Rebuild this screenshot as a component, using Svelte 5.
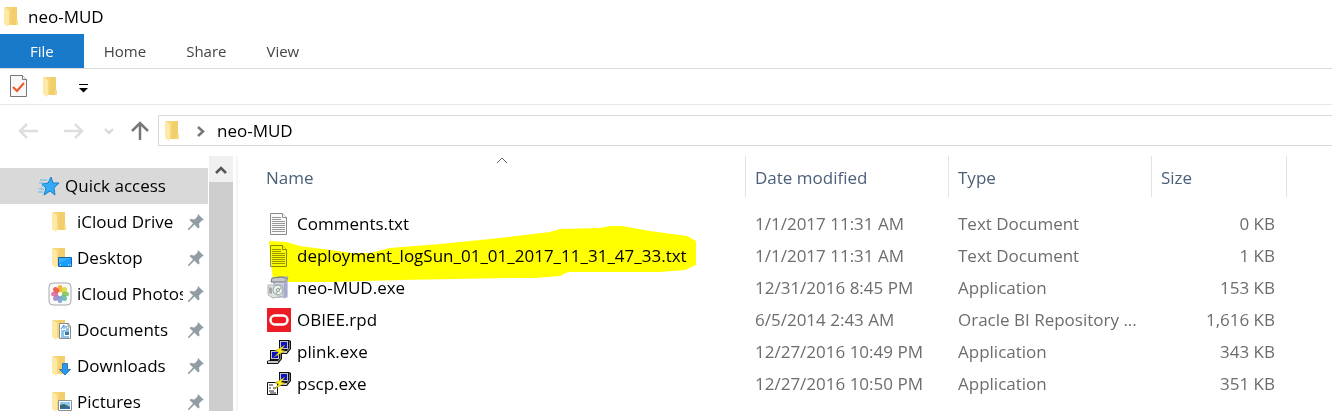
<script>
  const tabs = ["Home", "Share", "View"];

  const places = [
    { name: "iCloud Drive", icon: "folder" },
    { name: "Desktop", icon: "desktop" },
    { name: "iCloud Photos", icon: "photos" },
    { name: "Documents", icon: "documents" },
    { name: "Downloads", icon: "downloads" },
    { name: "Pictures", icon: "pictures" },
  ];

  const files = [
    { name: "Comments.txt", date: "1/1/2017 11:31 AM", type: "Text Document", size: "0 KB", icon: "text" },
    { name: "deployment_logSun_01_01_2017_11_31_47_33.txt", date: "1/1/2017 11:31 AM", type: "Text Document", size: "1 KB", icon: "text", marked: true },
    { name: "neo-MUD.exe", date: "12/31/2016 8:45 PM", type: "Application", size: "153 KB", icon: "installer" },
    { name: "OBIEE.rpd", date: "6/5/2014 2:43 AM", type: "Oracle BI Repository ...", size: "1,616 KB", icon: "oracle" },
    { name: "plink.exe", date: "12/27/2016 10:49 PM", type: "Application", size: "343 KB", icon: "plink" },
    { name: "pscp.exe", date: "12/27/2016 10:50 PM", type: "Application", size: "351 KB", icon: "pscp" },
  ];

  const petals = ["#f7a823", "#d9d62c", "#7fc04c", "#5fb8a0", "#6d9fd8", "#9a7fc4", "#d9669a", "#ee4b3a"];
</script>

{#snippet folderShape()}
  <path d="M5 2h12v18H8z" fill="#f6d67a" />
  <path d="M11 2h6v18h-6z" fill="#f3cf6b" />
  <path d="M16 15h2v5h-2z" fill="#f8dc8a" />
  <path d="M4 2l5 3v15l-1 2-4-3z" fill="#ffe9a6" />
{/snippet}

{#snippet folder()}
  <svg class="icon" width="24" height="24" viewBox="0 0 24 24" aria-hidden="true">{@render folderShape()}</svg>
{/snippet}

{#snippet computer(x, y)}
  <g transform="translate({x} {y})">
    <path d="M3 0h10l2 1v8l-4 5H0v-3l3-1z" fill="#111" />
    <path d="M4 1h8v8H4z" fill="#c6c6c6" />
    <path d="M5 2h6v6H5z" fill="#0a12c8" />
    <path d="M1 11h10v2H1z" fill="#c6c6c6" />
    <path d="M13 2l1-1v8l-3 3v-2l2-2z" fill="#777" />
  </g>
{/snippet}

{#snippet placeIcon(kind)}
  <svg class="icon" width="24" height="24" viewBox="0 0 24 24" aria-hidden="true">
    {#if kind === "photos"}
      <rect x="1" y="1" width="22" height="22" rx="4" fill="#fafafa" stroke="#a8a8a8" />
      {#each petals as color, i}
        <ellipse cx="12" cy="6.500" rx="2.500" ry="3.500" fill={color} fill-opacity="0.85" transform="rotate({i * 45} 12 12)" />
      {/each}
    {:else}
      {@render folderShape()}
    {/if}
    {#if kind === "desktop"}
      <path d="M10.5 11.5h13v9h-13z" fill="#1a9fff" stroke="#1266ad" />
      <path d="M11 12h12l-12 5z" fill="#38b0ff" />
      <path d="M12 19h1m7 0h1m1 0h1" stroke="#fff" />
    {:else if kind === "documents"}
      <path d="M11.5 5.5h9l2 3v12h-11z" fill="#fff" stroke="#8b8b8b" />
      <path d="M20 5v4h3" fill="none" stroke="#8b8b8b" />
      <path d="M13 11l3-4v4m1-2h2m-1 2h3m-8 2h8m-8 2h3m-3 2h3m-3 2h8" fill="none" stroke="#2389cc" />
      <path d="M17 14h4v3h-4z" fill="#347bb0" />
    {:else if kind === "downloads"}
      <path d="M14.5 9.5h5v6h3l-5.500 5.500-5.500-5.500h3z" fill="#2997ec" stroke="#347bb9" />
    {:else if kind === "pictures"}
      <path d="M10.5 10.500h13v10h-13z" fill="#fff" stroke="#8e8e8e" />
      <path d="M12 12h10v7H12z" fill="#8fc9f1" />
      <path d="M12 15l4-1 6 3v2H12z" fill="#3c6774" />
      <path d="M12 18l10-1v2H12z" fill="#2e6dae" />
    {/if}
  </svg>
{/snippet}

{#snippet fileIcon(kind)}
  <svg class="icon" width="24" height="24" viewBox="0 0 24 24" aria-hidden="true">
    {#if kind === "text"}
      <path d="M3.500 1.500h12l4 4v17h-16z" fill="#fafafa" stroke="#8a8a8a" />
      <path d="M15.500 1.500v4h4" fill="#fff" stroke="#8a8a8a" />
      <path d="M5 5.500h9M5 7.500h9M5 9.500h13M5 11.500h13M5 13.500h13M5 15.500h13M5 17.500h13M5 19.500h13" stroke="#969696" />
    {:else if kind === "installer"}
      <path d="M7 3l4-2h10l-1 3v17H7z" fill="#d5d8ea" stroke="#9699b5" />
      <path d="M5 2l10-1 5 2-3 3H4z" fill="#c7c6cb" stroke="#77777c" />
      <path d="M17 6l3-3v17l-3 3z" fill="#a9aad0" />
      <path d="M1 9h15v11l-10 2-5-3z" fill="#dfe2e1" stroke="#b1b4b6" />
      <circle cx="11" cy="14" r="5" fill="#eaf0ed" stroke="#91999a" />
      <path d="M11 14l3-4 2 3zM11 14l-4 4 3 1z" fill="#a5cdb9" />
      <circle cx="11" cy="14" r="1.500" fill="#fff" stroke="#8d9294" />
      <path d="M2 11l3 1v6l-3-1z" fill="#a5a7a9" />
    {:else if kind === "oracle"}
      <path d="M0 0h24v24H0z" fill="#ed1c24" />
      <rect x="3.500" y="7.500" width="17" height="9" rx="4.500" fill="none" stroke="#fff" stroke-width="2.500" />
    {:else}
      {@render computer(9, 0)}
      {#if kind === "plink"}
        {@render computer(0, 10)}
      {:else}
        <path d="M.5 10.500h10v12H.5z" fill="#fff" stroke="#111" />
        <path d="M2 13h4m-4 3h2m2 0h3m-7 3h5m-4 2h6" stroke="#222" />
      {/if}
      <path d="M18 5l-10 6 4 1-5 5 11-6-4-1z" fill="#ffee20" stroke="#a09000" stroke-width=".5" />
    {/if}
  </svg>
{/snippet}

<div class="explorer">
  <header class="title">
    {@render folder()}
    <span>neo-MUD</span>
  </header>

  <nav class="ribbon" aria-label="Ribbon">
    <button class="tab file">File</button>
    {#each tabs as tab}
      <button class="tab">{tab}</button>
    {/each}
  </nav>

  <div class="quickbar">
    <button aria-label="Properties">
      <svg class="icon" width="24" height="24" viewBox="0 0 24 24">
        <path d="M3.500 .500h12l4 4v17h-16z" fill="#f8f8f8" stroke="#777" />
        <path d="M15.500 .500v4h4" fill="#fff" stroke="#777" />
        <path d="M6 12l4 4 7-8" fill="none" stroke="#f0561d" stroke-width="2" />
      </svg>
    </button>
    <button aria-label="New folder">{@render folder()}</button>
    <button aria-label="Customize Quick Access Toolbar">
      <svg class="icon" width="24" height="24" viewBox="0 0 24 24">
        <path d="M8 9.500h9" stroke="#000" />
        <path d="M8 13h9l-4.500 4.500z" />
      </svg>
    </button>
  </div>

  <div class="navbar">
    <button aria-label="Back" disabled>
      <svg class="icon" width="24" height="24" viewBox="0 0 24 24"><path d="M22 12H4m7-7l-7 7 7 7" fill="none" stroke="#dedede" stroke-width="2.500" /></svg>
    </button>
    <button aria-label="Forward" disabled>
      <svg class="icon" width="24" height="24" viewBox="0 0 24 24"><path d="M2 12h18m-7-7l7 7-7 7" fill="none" stroke="#dedede" stroke-width="2.500" /></svg>
    </button>
    <button class="recent" aria-label="Recent locations" disabled>
      <svg class="icon" width="12" height="24" viewBox="0 0 12 24"><path d="M2 10l4 4 4-4" fill="none" stroke="#d6d6d6" stroke-width="2" /></svg>
    </button>
    <button class="up" aria-label="Up">
      <svg class="icon" width="24" height="24" viewBox="0 0 24 24"><path d="M12 21V4m-8 8l8-8 8 8" fill="none" stroke="#777" stroke-width="2.500" /></svg>
    </button>
    <div class="address">
      {@render folder()}
      <svg class="icon" width="12" height="24" viewBox="0 0 12 24" aria-hidden="true"><path d="M3 8l5 4.500L3 17" fill="none" stroke="#777" stroke-width="2.500" /></svg>
      <a href="#neo-mud">neo-MUD</a>
    </div>
  </div>

  <div class="body">
    <nav class="places" aria-label="Navigation pane">
      <a class="place root" href="#quick">
        <svg class="icon" width="24" height="24" viewBox="0 0 24 24" aria-hidden="true">
          <path d="M15 3l2 6h6l-5 5 1 7-5-4-6 4 2-7-4-4 6-1z" fill="#35aaf5" stroke="#1681cd" />
          <path d="M4 6h7M3 9h5M5 12h3M3 15h5M2 18h5" stroke="#65b7e9" />
        </svg>
        <span>Quick access</span>
      </a>
      {#each places as place}
        <a class="place" href="#{place.icon}">
          {@render placeIcon(place.icon)}
          <span>{place.name}</span>
          <svg class="pin" width="16" height="16" viewBox="0 0 16 16" aria-hidden="true">
            <path d="M10 0l6 6-2 .5-3 3 .5 4-1.500 1-3.500-4L1 16H0v-1l5-5.500L1.500 6l1-1 4 .5 3-3z" fill="#919ca3" />
          </svg>
        </a>
      {/each}
    </nav>

    <div class="scrollbar">
      <button aria-label="Scroll up">
        <svg class="icon" width="12" height="12" viewBox="0 0 12 12"><path d="M1 10l5-5 5 5" fill="none" stroke="#555" stroke-width="2.500" /></svg>
      </button>
    </div>

    <main>
      <table>
        <thead>
          <tr>
            <th class="name" aria-sort="ascending">
              <button>Name</button>
              <svg class="sort" width="12" height="8" viewBox="0 0 12 8" aria-hidden="true"><path d="M1 7l5-5 5 5" fill="none" stroke="#666" /></svg>
            </th>
            <th class="date"><button>Date modified</button></th>
            <th class="type"><button>Type</button></th>
            <th class="size"><button>Size</button></th>
          </tr>
        </thead>
        <tbody>
          {#each files as file}
            <tr>
              <td class="name">
                <div class="entry">
                  {@render fileIcon(file.icon)}
                  <span>{file.name}</span>
                </div>
                {#if file.marked}
                  <svg class="marker" width="430" height="58" viewBox="0 0 430 58" aria-hidden="true">
                    <path d="M1 15L18 16 32 20 62 24 84 27H102L122 22 172 18 232 12 282 6 292 3 332 2 342 0H354L382 5 419 10 428 15V39L417 44 392 46H300L292 50 267 52H242L132 54 62 56H17L5 53 3 38z" fill="#ff0" />
                  </svg>
                {/if}
              </td>
              <td>{file.date}</td>
              <td>{file.type}</td>
              <td class="amount">{file.size}</td>
            </tr>
          {/each}
        </tbody>
      </table>
    </main>
  </div>
</div>

<style>
  :global(body) {
    margin: 0;
    background: #fff;
  }

  .explorer {
    height: 100vh;
    display: flex;
    flex-direction: column;
    overflow: hidden;
    font-family: "Open Sans", "Noto Sans", sans-serif;
    font-size: 17px;
    line-height: 24px;
    color: #000;
  }

  button {
    border: 0;
    padding: 0;
    background: none;
    font: inherit;
    color: inherit;
  }

  a {
    color: inherit;
    text-decoration: none;
  }

  .icon {
    display: block;
    flex: none;
  }

  .title {
    height: 34px;
    display: flex;
    align-items: center;
    gap: 4px;
  }

  .ribbon {
    display: flex;
    height: 34px;
    border-bottom: 1px solid #dadada;
    font-size: 15px;
  }

  .tab {
    padding: 0 20px;
    color: #444;
  }

  .tab.file {
    padding: 0 30px;
    background: #1979ca;
    color: #fff;
  }

  .quickbar {
    display: flex;
    align-items: center;
    gap: 8px;
    height: 35px;
    padding-left: 7px;
    border-bottom: 1px solid #e8e8e8;
  }

  .navbar {
    display: flex;
    align-items: center;
    padding: 10px 0 10px 16px;
    gap: 22px;
  }

  .navbar .recent {
    margin-left: -5px;
  }

  .navbar .up {
    margin-left: -9px;
  }

  .address {
    flex: 1;
    display: flex;
    align-items: center;
    height: 29px;
    margin-left: -16px;
    padding-left: 2px;
    gap: 10px;
    border: 1px solid #d9d9d9;
    border-right: 0;
  }

  .body {
    flex: 1;
    min-height: 0;
    display: flex;
  }

  .places {
    width: 208px;
    flex: none;
    padding-top: 12px;
    overflow: hidden;
  }

  .place {
    display: flex;
    align-items: center;
    gap: 5px;
    height: 36px;
    padding: 0 4px 0 48px;
  }

  .place.root {
    padding-left: 36px;
    background: #d9d9d9;
  }

  .place span {
    flex: 1;
    min-width: 0;
    overflow: hidden;
    white-space: nowrap;
  }

  .pin {
    flex: none;
  }

  .scrollbar {
    width: 24px;
    flex: none;
    margin-left: 1px;
    background: #cdcdcd;
  }

  .scrollbar button {
    display: flex;
    align-items: center;
    justify-content: center;
    width: 100%;
    height: 26px;
    background: #f0f0f0;
  }

  main {
    flex: 1;
    min-width: 0;
    margin-left: 3px;
    padding-right: 45px;
    border-left: 2px solid #f5f5f5;
  }

  table {
    width: 100%;
    table-layout: fixed;
    border-collapse: separate;
    border-spacing: 0;
    white-space: nowrap;
  }

  th {
    position: relative;
    height: 41px;
    padding: 2px 0 0 9px;
    box-sizing: border-box;
    border-right: 1px solid #e3e3e3;
    font-weight: normal;
    text-align: left;
    color: #4c607a;
  }

  th.name {
    padding-left: 28px;
  }

  th.date,
  th.type {
    width: 203px;
  }

  th.size {
    width: 135px;
  }

  .sort {
    position: absolute;
    top: 0;
    left: calc(50% + 4px);
  }

  td {
    height: 32px;
    padding: 0 0 0 9px;
    color: #6d6d6d;
  }

  tbody::before {
    content: "";
    display: block;
    height: 11px;
  }

  td.name {
    position: relative;
    padding-left: 29px;
    color: #000;
  }

  .entry {
    display: flex;
    align-items: center;
    gap: 6px;
  }

  .marker {
    position: absolute;
    left: 30px;
    top: -14px;
    mix-blend-mode: multiply;
    pointer-events: none;
  }

  td.amount {
    padding-right: 12px;
    text-align: right;
  }
</style>
